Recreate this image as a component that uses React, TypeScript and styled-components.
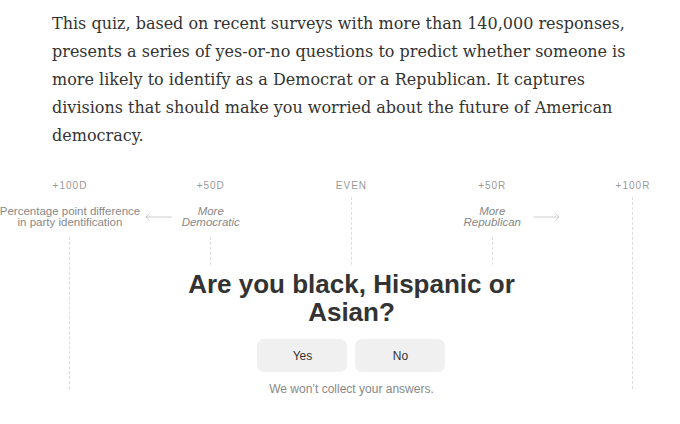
import styled, { createGlobalStyle } from "styled-components"

const GlobalStyle = createGlobalStyle`
  body {
    margin: 0;
    background: #fff;
  }
`

type TickData = {
  label: string
  note?: string[]
  italic?: boolean
  arrow?: "left" | "right"
}

const ticks: TickData[] = [
  { label: "+100D", note: ["Percentage point difference", "in party identification"] },
  { label: "+50D", note: ["More", "Democratic"], italic: true, arrow: "left" },
  { label: "EVEN" },
  { label: "+50R", note: ["More", "Republican"], italic: true, arrow: "right" },
  { label: "+100R" },
]

function ArrowIcon({ dir }: { dir: "left" | "right" }) {
  return (
    <ArrowSvg $dir={dir} width="27" height="8" viewBox="0 0 27 8">
      {dir === "left" ? (
        <path d="M26.5 4H1M4.5 0.6L1 4l3.5 3.4" />
      ) : (
        <path d="M0.5 4H26M22.5 0.6L26 4l-3.5 3.4" />
      )}
    </ArrowSvg>
  )
}

export default function App() {
  return (
    <Page>
      <GlobalStyle />
      <Intro>
        This quiz, based on recent surveys with more than 140,000 responses,
        presents a series of yes-or-no questions to predict whether someone is
        more likely to identify as a Democrat or a Republican. It captures
        divisions that should make you worried about the future of American
        democracy.
      </Intro>

      <Chart>
        {ticks.map((t, i) => (
          <Tick key={t.label} $col={i + 1}>
            <TickLabel>{t.label}</TickLabel>
            {t.note && (
              <NoteRow>
                <ArrowCell $side="left">
                  {t.arrow === "left" && <ArrowIcon dir="left" />}
                </ArrowCell>
                <Note $italic={t.italic}>
                  {t.note[0]}
                  <br />
                  {t.note[1]}
                </Note>
                <ArrowCell $side="right">
                  {t.arrow === "right" && <ArrowIcon dir="right" />}
                </ArrowCell>
              </NoteRow>
            )}
            <TickLine />
          </Tick>
        ))}

        <Question>
          <Title>
            Are you black, Hispanic or
            <br />
            Asian?
          </Title>
          <Answers>
            <AnswerButton>Yes</AnswerButton>
            <AnswerButton>No</AnswerButton>
          </Answers>
          <Disclaimer>We won’t collect your answers.</Disclaimer>
        </Question>
      </Chart>
    </Page>
  )
}

const Page = styled.div`
  width: 680px;
  height: 424px;
  overflow: hidden;
  padding-top: 10px;
  box-sizing: border-box;
`

const Intro = styled.p`
  margin: 0 0 0 52px;
  width: 600px;
  font-family: "DejaVu Serif", serif;
  font-size: 16px;
  line-height: 28px;
  color: #333;
`

const Chart = styled.div`
  display: grid;
  grid-template-columns: repeat(5, 140.75px);
  grid-template-rows: 220px;
  margin: 29px 0 0 -0.4px;
`

const Tick = styled.div<{ $col: number }>`
  grid-row: 1;
  grid-column: ${(p) => p.$col};
  display: flex;
  flex-direction: column;
  align-items: center;
  padding-bottom: 10px;
`

const TickLabel = styled.div`
  font-family: "Liberation Sans", sans-serif;
  font-size: 10px;
  line-height: 14px;
  letter-spacing: 1px;
  color: #999;
`

const NoteRow = styled.div`
  align-self: stretch;
  display: grid;
  grid-template-columns: minmax(0, 1fr) auto minmax(0, 1fr);
  align-items: center;
  margin-top: 13px;
  margin-bottom: 5px;
`

const ArrowCell = styled.div<{ $side: "left" | "right" }>`
  display: flex;
  justify-content: ${(p) => (p.$side === "left" ? "flex-end" : "flex-start")};
`

const ArrowSvg = styled.svg<{ $dir: "left" | "right" }>`
  display: block;
  flex: none;
  margin: ${(p) => (p.$dir === "left" ? "0 10px 0 0" : "0 0 0 12px")};
  fill: none;
  stroke: #ccc;
  stroke-width: 1;
`

const Note = styled.div<{ $italic?: boolean }>`
  white-space: nowrap;
  text-align: center;
  font-family: "Liberation Sans", sans-serif;
  font-size: 11.5px;
  line-height: 11px;
  font-style: ${(p) => (p.$italic ? "italic" : "normal")};
  color: #888;
`

const TickLine = styled.div`
  flex: 1;
  margin-top: 4px;
  border-left: 1px dashed #ddd;
`

const Question = styled.div`
  grid-row: 1;
  grid-column: 2 / 5;
  justify-self: center;
  align-self: end;
  z-index: 1;
  width: 340px;
  padding-top: 4px;
  padding-bottom: 3px;
  background: #fff;
  display: flex;
  flex-direction: column;
  align-items: center;
`

const Title = styled.h2`
  margin: 0;
  font-family: "Liberation Sans", sans-serif;
  font-weight: 700;
  font-size: 26px;
  line-height: 28px;
  text-align: center;
  color: #333;
`

const Answers = styled.div`
  display: flex;
  gap: 8px;
  margin-top: 13px;
`

const AnswerButton = styled.button`
  width: 90px;
  height: 33px;
  border: none;
  border-radius: 7px;
  background: #f0f0f0;
  font-family: "Liberation Sans", sans-serif;
  font-size: 12px;
  color: #333;
`

const Disclaimer = styled.div`
  margin-top: 10px;
  font-family: "Liberation Sans", sans-serif;
  font-size: 12px;
  line-height: 14px;
  color: #888;
`
